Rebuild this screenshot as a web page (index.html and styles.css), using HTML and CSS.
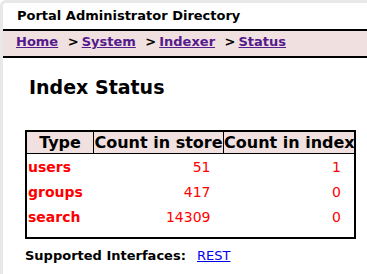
FILE: index.html
```html
<!DOCTYPE html>
<html lang="en">
	<head>
		<meta charset="UTF-8" />
		<title>Portal Administrator Directory</title>
		<link rel="stylesheet" href="styles.css">
	</head>
	<body>
		<div class="frame">
			<div class="header">Portal Administrator Directory</div>
			<div class="crumbs">
				<a href="#">Home</a>
				<span class="sep">&gt;</span><a href="#">System</a>
				<span class="sep">&gt;</span><a href="#">Indexer</a>
				<span class="sep">&gt;</span><a href="#">Status</a>
			</div>

			<div class="content">
				<h1>Index Status</h1>

				<table class="status">
					<thead>
						<tr>
							<th class="col-type">Type</th>
							<th class="col-store">Count in store</th>
							<th class="col-index">Count in index</th>
						</tr>
					</thead>
					<tbody>
						<tr>
							<td class="name">users</td>
							<td class="num">51</td>
							<td class="num">1</td>
						</tr>
						<tr>
							<td class="name">groups</td>
							<td class="num">417</td>
							<td class="num">0</td>
						</tr>
						<tr>
							<td class="name">search</td>
							<td class="num">14309</td>
							<td class="num">0</td>
						</tr>
					</tbody>
				</table>

				<div class="interfaces">
					<span class="label">Supported Interfaces:</span>
					<a href="#" class="rest">REST</a>
				</div>
			</div>
		</div>
	</body>
</html>
```

FILE: styles.css
```css
/* base */
body,
html {
	margin: 0;
	padding: 0;
	background-color: #ffffff;
	font-family: "DejaVu Sans", Verdana, sans-serif;
	color: #000;
}

.frame {
	border-top: 3px solid #e8e8e8;
	border-left: 3px solid #e8e8e8;
	border-top-left-radius: 6px;
	height: 271px;
}

/* header */
.header {
	font-size: 13px;
	font-weight: bold;
	line-height: 16px;
	padding: 5px 0 5px 14px;
	height: 16px;
}

.crumbs {
	background-color: #f0e0e0;
	border-top: 2px solid #000;
	border-bottom: 2px solid #000;
	height: 29px;
	box-sizing: border-box;
	padding: 3px 0 0 13px;
	font-size: 13px;
	font-weight: bold;
	line-height: 16px;
	white-space: nowrap;
}

.crumbs a {
	color: #551a8b;
}

.crumbs .sep {
	margin: 0 3px 0 5px;
}

/* content */
.content {
	padding-left: 22px;
}

h1 {
	font-size: 19px;
	font-weight: bold;
	margin: 18px 0 0 4px;
	line-height: 22px;
}

.status {
	margin-top: 32px;
	border-collapse: collapse;
	border: 2px solid #000;
	table-layout: fixed;
	width: 331px;
}

.status th {
	background-color: #f0e0e0;
	font-size: 16px;
	line-height: 19px;
	padding: 1px 0;
	border: 1px solid #000;
	border-top: 0;
	white-space: nowrap;
	overflow: hidden;
}

.col-type {
	width: 66px;
}

.col-store {
	width: 129px;
}

.status td {
	color: #ff0000;
	font-size: 14px;
	line-height: 17px;
	padding: 4px 0;
}

.status tbody tr:first-child td {
	padding-top: 5px;
}

.status tbody tr:last-child td {
	padding-bottom: 11px;
}

.status .name {
	font-weight: bold;
	padding-left: 1px;
}

.status .num {
	text-align: right;
	padding-right: 13px;
}

.interfaces {
	margin-top: 9px;
	font-size: 13px;
	line-height: 16px;
}

.interfaces .label {
	font-weight: bold;
	margin-right: 7px;
}

.rest {
	color: #0000ee;
}
```
